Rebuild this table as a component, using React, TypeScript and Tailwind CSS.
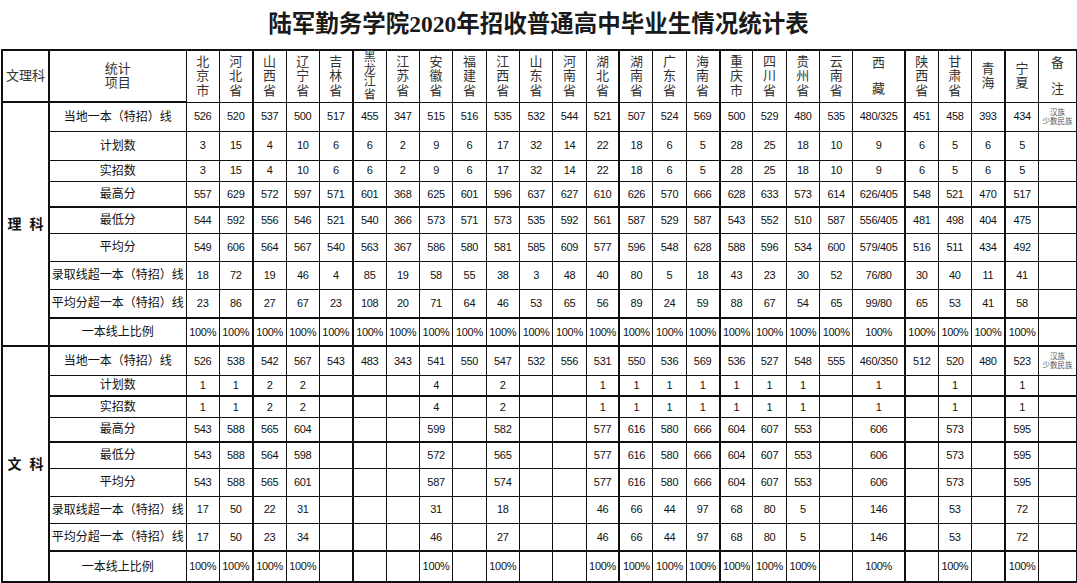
const PROVINCES: string[][] = [
  ['北', '京', '市'],
  ['河', '北', '省'],
  ['山', '西', '省'],
  ['辽', '宁', '省'],
  ['吉', '林', '省'],
  ['黑', '龙', '江', '省'],
  ['江', '苏', '省'],
  ['安', '徽', '省'],
  ['福', '建', '省'],
  ['江', '西', '省'],
  ['山', '东', '省'],
  ['河', '南', '省'],
  ['湖', '北', '省'],
  ['湖', '南', '省'],
  ['广', '东', '省'],
  ['海', '南', '省'],
  ['重', '庆', '市'],
  ['四', '川', '省'],
  ['贵', '州', '省'],
  ['云', '南', '省'],
  ['西', '藏'],
  ['陕', '西', '省'],
  ['甘', '肃', '省'],
  ['青', '海'],
  ['宁', '夏'],
];

// columns followed by a heavy rule
const THICK_COLS = [1, 4, 12, 15, 20, 23];

const COL_CLASSES = [
  'w-[47px]',
  'w-[137px]',
  ...Array(20).fill('w-[33.35px]'),
  'w-[52px]',
  'w-[33.33px]',
  'w-[33.33px]',
  'w-[33.33px]',
  'w-[34px]',
  'w-[38px]',
];

type Row = {
  label: string;
  values: string;
  h: string;
  thick?: boolean;
  remark?: boolean;
};

const all100 = Array(25).fill('100%').join(' ');

const SCIENCE: Row[] = [
  {
    label: '当地一本（特招）线',
    values: '526 520 537 500 517 455 347 515 516 535 532 544 521 507 524 569 500 529 480 535 480/325 451 458 393 434',
    h: 'h-[29px]',
    remark: true,
  },
  { label: '计划数', values: '3 15 4 10 6 6 2 9 6 17 32 14 22 18 6 5 28 25 18 10 9 6 5 6 5', h: 'h-[29px]' },
  { label: '实招数', values: '3 15 4 10 6 6 2 9 6 17 32 14 22 18 6 5 28 25 18 10 9 6 5 6 5', h: 'h-[21px]' },
  {
    label: '最高分',
    values: '557 629 572 597 571 601 368 625 601 596 637 627 610 626 570 666 628 633 573 614 626/405 548 521 470 517',
    h: 'h-[26px]',
    thick: true,
  },
  {
    label: '最低分',
    values: '544 592 556 546 521 540 366 573 571 573 535 592 561 587 529 587 543 552 510 587 556/405 481 498 404 475',
    h: 'h-[26px]',
  },
  {
    label: '平均分',
    values: '549 606 564 567 540 563 367 586 580 581 585 609 577 596 548 628 588 596 534 600 579/405 516 511 434 492',
    h: 'h-[28px]',
  },
  {
    label: '录取线超一本（特招）线',
    values: '18 72 19 46 4 85 19 58 55 38 3 48 40 80 5 18 43 23 30 52 76/80 30 40 11 41',
    h: 'h-[28px]',
  },
  {
    label: '平均分超一本（特招）线',
    values: '23 86 27 67 23 108 20 71 64 46 53 65 56 89 24 59 88 67 54 65 99/80 65 53 41 58',
    h: 'h-[29px]',
    thick: true,
  },
  { label: '一本线上比例', values: all100, h: 'h-[28px]', thick: true },
];

const ARTS: Row[] = [
  {
    label: '当地一本（特招）线',
    values: '526 538 542 567 543 483 343 541 550 547 532 556 531 550 536 569 536 527 548 555 460/350 512 520 480 523',
    h: 'h-[29px]',
    remark: true,
  },
  { label: '计划数', values: '1 1 2 2 - - - 4 - 2 - - 1 1 1 1 1 1 1 - 1 - 1 - 1', h: 'h-[21px]', thick: true },
  { label: '实招数', values: '1 1 2 2 - - - 4 - 2 - - 1 1 1 1 1 1 1 - 1 - 1 - 1', h: 'h-[21px]' },
  {
    label: '最高分',
    values: '543 588 565 604 - - - 599 - 582 - - 577 616 580 666 604 607 553 - 606 - 573 - 595',
    h: 'h-[25px]',
    thick: true,
  },
  {
    label: '最低分',
    values: '543 588 564 598 - - - 572 - 565 - - 577 616 580 666 604 607 553 - 606 - 573 - 595',
    h: 'h-[26px]',
  },
  {
    label: '平均分',
    values: '543 588 565 601 - - - 587 - 574 - - 577 616 580 666 604 607 553 - 606 - 573 - 595',
    h: 'h-[28px]',
  },
  {
    label: '录取线超一本（特招）线',
    values: '17 50 22 31 - - - 31 - 18 - - 46 66 44 97 68 80 5 - 146 - 53 - 72',
    h: 'h-[27px]',
  },
  {
    label: '平均分超一本（特招）线',
    values: '17 50 23 34 - - - 46 - 27 - - 46 66 44 97 68 80 5 - 146 - 53 - 72',
    h: 'h-[28px]',
    thick: true,
  },
  {
    label: '一本线上比例',
    values: '100% 100% 100% 100% - - - 100% - 100% - - 100% 100% 100% 100% 100% 100% 100% - 100% - 100% - 100%',
    h: 'h-[31px]',
  },
];

const cell = 'border border-[#111] p-0 text-center align-middle whitespace-nowrap';

const HeaderCell = ({ chars, idx }: { chars: string[]; idx: number }) => {
  const edge = THICK_COLS.includes(idx) ? 'border-r-2' : '';
  let inner;
  if (chars.length === 2 && chars[0] === '西') {
    inner = (
      <div className="flex h-[50px] flex-col items-center justify-between py-[5px] leading-[14px]">
        <span>{chars[0]}</span>
        <span>{chars[1]}</span>
      </div>
    );
  } else {
    const lead = chars.length === 4 ? 'text-[12px] leading-[12.5px]' : 'leading-[14.5px]';
    inner = (
      <div className={`flex h-[50px] flex-col items-center justify-center ${lead}`}>
        {chars.map((c, i) => (
          <span key={i}>{c}</span>
        ))}
      </div>
    );
  }
  return <th className={`${cell} ${edge} font-normal`}>{inner}</th>;
};

const Section = ({ name, rows }: { name: string[]; rows: Row[] }) => (
  <>
    {rows.map((row, r) => {
      const vals = row.values.split(' ');
      const bottom = row.thick ? 'border-b-2' : '';
      return (
        <tr key={r} className={row.h}>
          {r === 0 && (
            <td rowSpan={rows.length} className={`${cell} border-r-2 border-b-2`}>
              <div className="flex justify-center gap-[8px] text-[14px] font-bold text-[#111]">
                <span>{name[0]}</span>
                <span>{name[1]}</span>
              </div>
            </td>
          )}
          <td className={`${cell} ${bottom} text-[12px] text-[#111]`}>{row.label}</td>
          {vals.map((v, i) => (
            <td
              key={i}
              className={`${cell} ${bottom} ${THICK_COLS.includes(i) ? 'border-r-2' : ''} text-[11px] tracking-[-0.3px] text-[#111]`}
            >
              {v === '-' ? '' : v}
            </td>
          ))}
          <td className={`${cell} ${bottom}`}>
            {row.remark && (
              <div className="flex flex-col items-center text-[7.5px] leading-[9px] text-[#555]">
                <span>汉族</span>
                <span>少数民族</span>
              </div>
            )}
          </td>
        </tr>
      );
    })}
  </>
);

export default function App() {
  return (
    <div
      className="h-[583px] w-[1077px] overflow-hidden bg-white text-[#111]"
      style={{ fontFamily: '"Liberation Sans", "Noto Sans CJK SC", sans-serif' }}
    >
      <div className="flex h-[49px] items-center justify-center">
        <h1
          className="text-[23.5px] font-bold text-[#1a1a1a]"
          style={{ fontFamily: '"Liberation Serif", "Noto Sans CJK SC", serif' }}
        >
          陆军勤务学院2020年招收普通高中毕业生情况统计表
        </h1>
      </div>
      <table className="ml-px w-[1075px] table-fixed border-collapse border-2 border-[#111]">
        <colgroup>
          {COL_CLASSES.map((c, i) => (
            <col key={i} className={c} />
          ))}
        </colgroup>
        <thead>
          <tr className="h-[52px] text-[13px] text-[#333]">
            <th className={`${cell} border-r-2 border-b-2 font-normal`}>文理科</th>
            <th className={`${cell} border-b-2 font-normal`}>
              <div className="flex flex-col items-center leading-[14px]">
                <span>统计</span>
                <span>项目</span>
              </div>
            </th>
            {PROVINCES.map((p, i) => (
              <HeaderCell key={i} chars={p} idx={i} />
            ))}
            <th className={`${cell} font-normal`}>
              <div className="flex h-[50px] flex-col items-center justify-between py-[5px] leading-[14px]">
                <span>备</span>
                <span>注</span>
              </div>
            </th>
          </tr>
        </thead>
        <tbody>
          <Section name={['理', '科']} rows={SCIENCE} />
          <Section name={['文', '科']} rows={ARTS} />
        </tbody>
      </table>
    </div>
  );
}
